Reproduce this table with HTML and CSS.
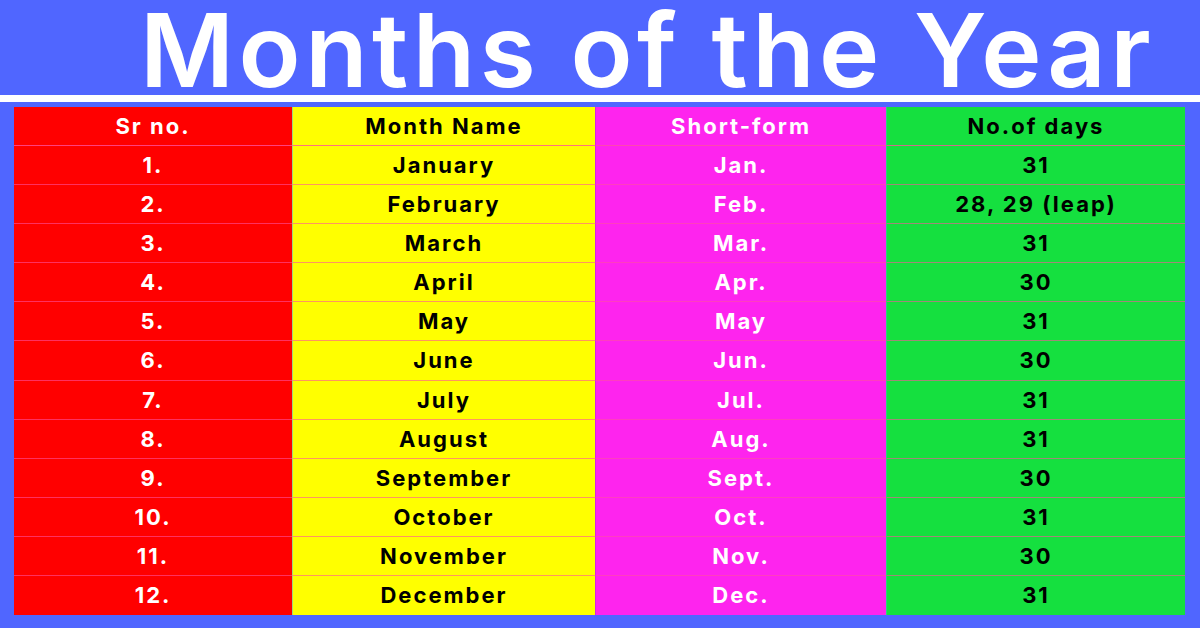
FILE: index.html
```html
<!DOCTYPE html>
<html>
<head>
<meta charset="utf-8">
<link rel="stylesheet" href="styles.css">
</head>
<body>
<div class="page">
  <h1 class="title">Months of the Year</h1>
  <div class="rule"></div>
  <div class="table">
    <div class="c red head">Sr no.</div><div class="c yellow head">Month Name</div><div class="c pink head">Short-form</div><div class="c green head">No.of days</div>
    <div class="c red">1.</div><div class="c yellow">January</div><div class="c pink">Jan.</div><div class="c green">31</div>
    <div class="c red">2.</div><div class="c yellow">February</div><div class="c pink">Feb.</div><div class="c green">28, 29 (leap)</div>
    <div class="c red">3.</div><div class="c yellow">March</div><div class="c pink">Mar.</div><div class="c green">31</div>
    <div class="c red">4.</div><div class="c yellow">April</div><div class="c pink">Apr.</div><div class="c green">30</div>
    <div class="c red">5.</div><div class="c yellow">May</div><div class="c pink">May</div><div class="c green">31</div>
    <div class="c red">6.</div><div class="c yellow">June</div><div class="c pink">Jun.</div><div class="c green">30</div>
    <div class="c red">7.</div><div class="c yellow">July</div><div class="c pink">Jul.</div><div class="c green">31</div>
    <div class="c red">8.</div><div class="c yellow">August</div><div class="c pink">Aug.</div><div class="c green">31</div>
    <div class="c red">9.</div><div class="c yellow">September</div><div class="c pink">Sept.</div><div class="c green">30</div>
    <div class="c red">10.</div><div class="c yellow">October</div><div class="c pink">Oct.</div><div class="c green">31</div>
    <div class="c red">11.</div><div class="c yellow">November</div><div class="c pink">Nov.</div><div class="c green">30</div>
    <div class="c red">12.</div><div class="c yellow">December</div><div class="c pink">Dec.</div><div class="c green">31</div>
  </div>
</div>
</body>
</html>
```
FILE: styles.css
```css
html, body {
  margin: 0;
  padding: 0;
}
body {
  width: 1200px;
  height: 628px;
  overflow: hidden;
  background: #5066ff;
  font-family: Inter, "Noto Sans", sans-serif;
}
.page {
  display: flex;
  flex-direction: column;
}
.title {
  margin: 0 0 -6px 0;
  height: 101px;
  padding-left: 140px;
  color: #ffffff;
  font-size: 102px;
  font-weight: 600;
  line-height: 101px;
  letter-spacing: 4.5px;
  white-space: nowrap;
}
.rule {
  position: relative;
  height: 7px;
  background: #ffffff;
}
.table {
  margin: 5px 0 0 14px;
  width: 1171px;
  height: 508px;
  display: grid;
  grid-template-columns: 278px 303px 291px 299px;
  grid-template-rows: repeat(13, 1fr);
}
.c {
  display: flex;
  align-items: center;
  justify-content: center;
  font-size: 22px;
  font-weight: 700;
  letter-spacing: 2px;
  border-bottom: 1px solid rgba(255, 80, 160, 0.6);
}
.red { background: #ff0000; color: #ffffff; }
.yellow { background: #ffff00; color: #000000; border-left: 1px solid rgba(120, 200, 180, 0.7); }
.pink { background: #fe24ee; color: #ffffff; border-left: 1px solid rgba(200, 40, 220, 0.8); }
.green { background: #15e03f; color: #000000; border-left: 1px solid rgba(60, 200, 180, 0.6); }
.head { border-bottom-color: rgba(255, 80, 160, 0.8); }
.c:nth-last-child(-n+4) { border-bottom: none; }
```
